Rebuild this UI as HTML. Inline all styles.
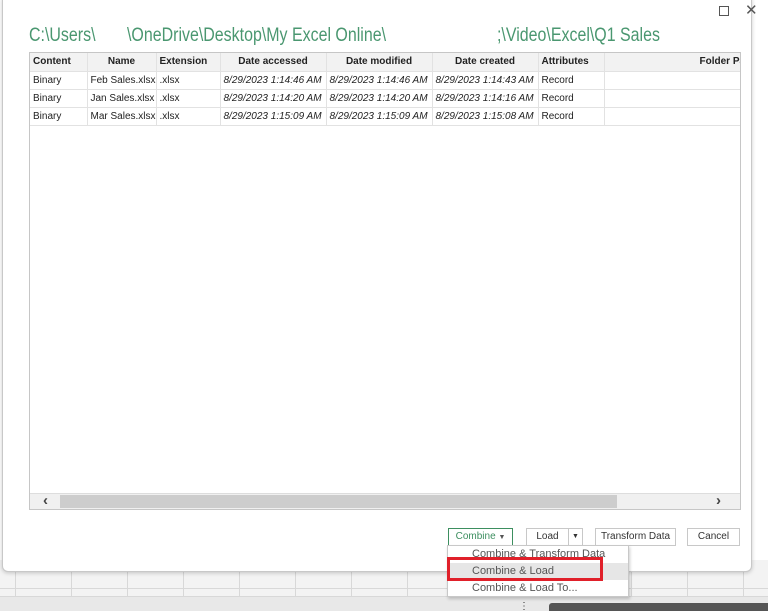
<!DOCTYPE html>
<html><head><style>
*{margin:0;padding:0;box-sizing:border-box}
body{width:768px;height:611px;overflow:hidden;background:#fff;font-family:"Liberation Sans",sans-serif;position:relative}
.bg{position:absolute;left:0;top:560px;width:768px;height:51px;background:#f3f3f3}
.vl{position:absolute;top:560px;height:37px;width:1px;background:#d8d8d8}
.hl{position:absolute;left:0;width:768px;height:1px;background:#d8d8d8}
.bot{position:absolute;left:0;top:597px;width:768px;height:14px;background:#e8e8e8}
.dlg{position:absolute;left:2px;top:-6px;width:750px;height:578px;background:#fff;border:1px solid #c8c8c8;border-radius:6px;box-shadow:0 1px 4px rgba(0,0,0,.2)}
.ti{position:absolute;top:25px;font-size:19px;color:#4a9770;white-space:nowrap;transform-origin:0 0;transform:scaleX(0.84)}
.tbl{position:absolute;left:29px;top:52px;width:712px;height:458px;border:1px solid #c6c6c6;overflow:hidden}
table{border-collapse:collapse;font-size:10px;position:absolute;left:0;top:0;table-layout:fixed;width:860px}
td,th{height:18px;border-right:1px solid #e2e2e2;border-bottom:1px solid #e2e2e2;padding:0 3px;white-space:nowrap;font-weight:normal;color:#222;overflow:hidden}
th{font-weight:bold;background:#f2f2f2}
td i{font-style:italic}
.sb{position:absolute;left:0;bottom:0;width:710px;height:16px;background:#f0f0f0;border-top:1px solid #ddd}
.btn{position:absolute;top:528px;height:18px;border:1px solid #c8c8c8;font-size:10px;color:#333;text-align:center;line-height:16px;background:#fff}
.menu{position:absolute;left:447px;top:545px;width:182px;height:52px;background:#fff;border:1px solid #c8c8c8;box-shadow:1px 2px 3px rgba(0,0,0,.2);font-size:11px;color:#555}
.menu div{height:17px;line-height:16px;padding-left:24px}
</style></head><body>
<div class="bg"></div>
<div class="vl" style="left:15px"></div><div class="vl" style="left:71px"></div><div class="vl" style="left:127px"></div><div class="vl" style="left:183px"></div><div class="vl" style="left:239px"></div><div class="vl" style="left:295px"></div><div class="vl" style="left:351px"></div><div class="vl" style="left:407px"></div><div class="vl" style="left:631px"></div><div class="vl" style="left:687px"></div><div class="vl" style="left:743px"></div>
<div class="hl" style="top:588px"></div><div class="hl" style="top:596px"></div>
<div class="bot"></div>
<div style="position:absolute;left:549px;top:603px;width:219px;height:8px;background:#555;border-radius:3px 0 0 0"></div>
<div style="position:absolute;left:519px;top:601px;font-size:10px;color:#333">⋮</div>
<div class="dlg"></div>
<div style="position:absolute;left:719px;top:6px;width:10px;height:10px;border:1px solid #555"></div>
<div style="position:absolute;left:745px;top:1px;font-size:15px;color:#555">✕</div>
<div class="ti" style="left:29px">C:\Users\</div>
<div class="ti" style="left:127px">\OneDrive\Desktop\My Excel Online\</div>
<div class="ti" style="left:497px">;\Video\Excel\Q1 Sales</div>
<div class="tbl">
<table>
<colgroup><col style="width:57px"><col style="width:69px"><col style="width:64px"><col style="width:106px"><col style="width:106px"><col style="width:106px"><col style="width:66px"><col style="width:286px"></colgroup>
<tr><th style="text-align:left">Content</th><th>Name</th><th style="text-align:left">Extension</th><th>Date accessed</th><th>Date modified</th><th>Date created</th><th style="text-align:left">Attributes</th><th style="text-align:left;padding-left:95px">Folder Path</th></tr>
<tr><td>Binary</td><td>Feb Sales.xlsx</td><td>.xlsx</td><td><i>8/29/2023 1:14:46 AM</i></td><td><i>8/29/2023 1:14:46 AM</i></td><td><i>8/29/2023 1:14:43 AM</i></td><td>Record</td><td></td></tr>
<tr><td>Binary</td><td>Jan Sales.xlsx</td><td>.xlsx</td><td><i>8/29/2023 1:14:20 AM</i></td><td><i>8/29/2023 1:14:20 AM</i></td><td><i>8/29/2023 1:14:16 AM</i></td><td>Record</td><td></td></tr>
<tr><td>Binary</td><td>Mar Sales.xlsx</td><td>.xlsx</td><td><i>8/29/2023 1:15:09 AM</i></td><td><i>8/29/2023 1:15:09 AM</i></td><td><i>8/29/2023 1:15:08 AM</i></td><td>Record</td><td></td></tr>
</table>
<div class="sb"><div style="position:absolute;left:30px;top:1px;width:557px;height:13px;background:#cdcdcd"></div>
<div style="position:absolute;left:13px;top:-2px;font-size:15px;font-weight:bold;color:#444">‹</div>
<div style="position:absolute;left:686px;top:-2px;font-size:15px;font-weight:bold;color:#444">›</div></div>
</div>
<div class="btn" style="left:448px;width:65px;border-color:#3d8f60;color:#3d8f60">Combine <span style="font-size:7px;color:#555">▼</span></div>
<div class="btn" style="left:526px;width:43px">Load</div>
<div class="btn" style="left:568px;width:15px;font-size:7px">▼</div>
<div class="btn" style="left:595px;width:81px">Transform Data</div>
<div class="btn" style="left:687px;width:53px">Cancel</div>
<div class="menu"><div>Combine &amp; Transform Data</div><div style="background:#e6e6e6">Combine &amp; Load</div><div>Combine &amp; Load To...</div></div>
<div style="position:absolute;left:447px;top:557px;width:156px;height:24px;border:3px solid #e0202a"></div>
</body></html>
